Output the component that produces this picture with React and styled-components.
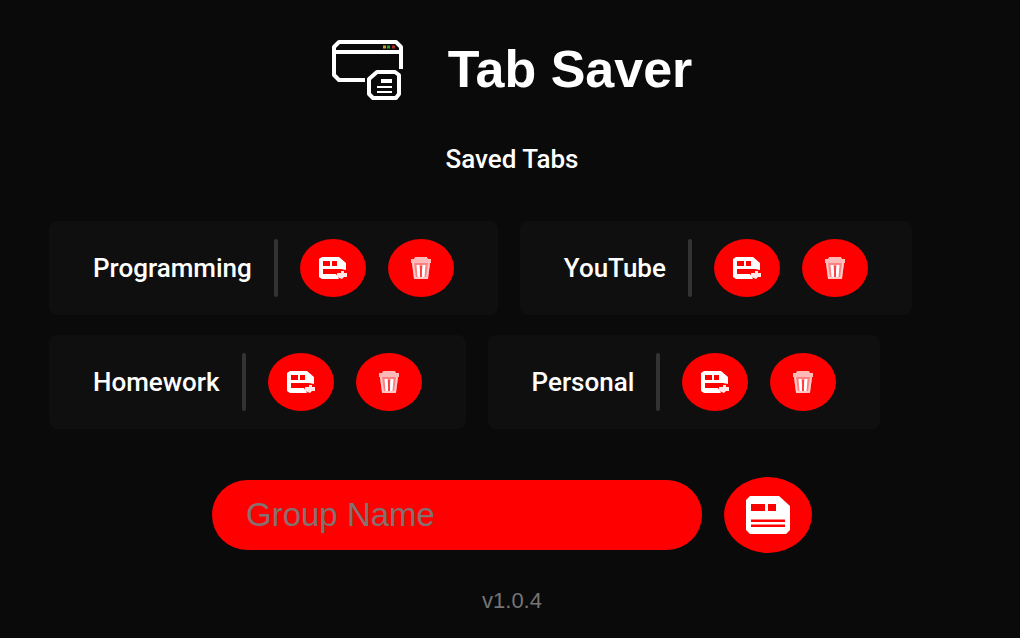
import React, { useState } from 'react';
import styled, { createGlobalStyle } from 'styled-components';

const GlobalStyle = createGlobalStyle`
  * {
    box-sizing: border-box;
  }

  body {
    margin: 0;
    background-color: #0a0a0a;
    color: #fff;
    font-family: Arial, 'Liberation Sans', sans-serif;
  }
`;

const Page = styled.main`
  display: flex;
  flex-direction: column;
  padding: 36px 45px 24px 49px;
`;

const Header = styled.header`
  display: flex;
  align-items: center;
  justify-content: center;
  gap: 44px;
  height: 66px;
`;

const Title = styled.h1`
  margin: 0;
  font-size: 52px;
  line-height: 60px;
`;

const Subtitle = styled.h2`
  margin: 42px 0 47px;
  font-family: Roboto, sans-serif;
  font-size: 26px;
  font-weight: 500;
  line-height: 30px;
  text-align: center;
`;

const GroupList = styled.ul`
  display: flex;
  flex-wrap: wrap;
  gap: 20px 22px;
  margin: 0;
  padding: 0;
  list-style: none;
`;

const GroupCard = styled.li`
  display: flex;
  align-items: center;
  gap: 22px;
  padding: 18px 44px;
  border-radius: 8px;
  background-color: #0f0f0f;
`;

const GroupName = styled.span`
  font-family: Roboto, sans-serif;
  font-size: 26px;
  font-weight: 500;
  line-height: 30px;
`;

const Divider = styled.span`
  align-self: stretch;
  width: 4px;
  border-radius: 2px;
  background-color: #333;
`;

const RoundButton = styled.button`
  display: flex;
  align-items: center;
  justify-content: center;
  flex-shrink: 0;
  width: ${({ $large }) => ($large ? 88 : 66)}px;
  height: ${({ $large }) => ($large ? 76 : 58)}px;
  padding: 0;
  border: none;
  border-radius: 50%;
  background-color: #f00;
  color: #fff;
  cursor: pointer;
`;

const SaveForm = styled.form`
  display: flex;
  align-items: center;
  justify-content: center;
  gap: 22px;
  margin-top: 48px;
`;

const NameInput = styled.input`
  flex: 0 1 490px;
  min-width: 0;
  height: 70px;
  padding: 0 34px;
  border: none;
  border-radius: 40px;
  outline: none;
  background-color: #f00;
  color: #fff;
  font-family: inherit;
  font-size: 33px;

  &::placeholder {
    color: #857070;
    opacity: 1;
  }
`;

const Version = styled.footer`
  margin-top: 36px;
  color: #757575;
  font-size: 22px;
  line-height: 24px;
  text-align: center;
`;

const LogoIcon = () => (
  <svg width="72" height="62" viewBox="0 0 72 62" fill="none" aria-hidden="true">
    <path
      d="M33 42H7L2 37V9L7 4H64L69 9V31M2 14H69"
      stroke="#fff"
      strokeWidth="4"
      strokeLinejoin="round"
    />
    <path d="M51 9h3" stroke="#c9a21c" strokeWidth="3" />
    <path d="M55 9h3" stroke="#1fa83a" strokeWidth="3" />
    <path d="M60 9h3" stroke="#b3251f" strokeWidth="3" />
    <path
      d="M45 34H63L67 37V56L64 60H41L37 56V41Z"
      stroke="#fff"
      strokeWidth="4"
      strokeLinejoin="round"
    />
    <path d="M49 43H60" stroke="#fff" strokeWidth="4" />
    <path d="M45 49H60M45 54H60" stroke="#fff" strokeWidth="2" />
  </svg>
);

const SaveIcon = () => (
  <svg width="44" height="38" viewBox="0 0 44 38" aria-hidden="true">
    <path
      fill="currentColor"
      fillRule="evenodd"
      d="M4 0H33L44 10V34L40 38H4L0 34V4ZM5 8V15H19V8ZM22 8V15H30V8ZM5 23.500V26H39V23.500ZM5 28.500V31H39V28.500Z"
    />
  </svg>
);

const OpenIcon = () => (
  <svg width="28" height="24" viewBox="0 0 28 24" aria-hidden="true">
    <path
      fill="currentColor"
      fillRule="evenodd"
      d="M3 1H20L27 7V14L22 13H4V18H17L20 23H3L0 21V3ZM4 5V10H11V5ZM13 5V10H18V5Z"
    />
    <path
      fill="currentColor"
      d="M18 17H22V15H25V17H28V21H25L23 23L18 21Z"
      opacity="0.9"
    />
  </svg>
);

const TrashIcon = () => (
  <svg width="22" height="22" viewBox="0 0 22 22" fill="none" aria-hidden="true">
    <path fill="#ffb8b8" d="M5 0H17L18 2H21V6H1V2H4Z" />
    <path fill="#ff8080" d="M2 6H20L18 22H4Z" />
    <path d="M3 6L5 21H17L19 6" stroke="#ffc8c8" strokeWidth="2" />
    <path d="M8 8L9 20M14 8L13 20" stroke="#fff" strokeWidth="3" />
    <path d="M11 9V20" stroke="#ff4040" strokeWidth="2" />
  </svg>
);

const savedGroups = ['Programming', 'YouTube', 'Homework', 'Personal'];

const App = () => {
  const [groups, setGroups] = useState(savedGroups);
  const [name, setName] = useState('');

  const handleSave = (event) => {
    event.preventDefault();
    const trimmed = name.trim();
    if (!trimmed || groups.includes(trimmed)) return;
    setGroups([...groups, trimmed]);
    setName('');
  };

  const handleDelete = (group) => {
    setGroups(groups.filter((item) => item !== group));
  };

  return (
    <>
      <GlobalStyle />
      <Page>
        <Header>
          <LogoIcon />
          <Title>Tab Saver</Title>
        </Header>
        <Subtitle>Saved Tabs</Subtitle>
        <GroupList>
          {groups.map((group) => (
            <GroupCard key={group}>
              <GroupName>{group}</GroupName>
              <Divider />
              <RoundButton type="button" aria-label={`Open ${group}`}>
                <OpenIcon />
              </RoundButton>
              <RoundButton
                type="button"
                aria-label={`Delete ${group}`}
                onClick={() => handleDelete(group)}
              >
                <TrashIcon />
              </RoundButton>
            </GroupCard>
          ))}
        </GroupList>
        <SaveForm onSubmit={handleSave}>
          <NameInput
            type="text"
            aria-label="Group Name"
            placeholder="Group Name"
            value={name}
            onChange={(event) => setName(event.target.value)}
          />
          <RoundButton type="submit" aria-label="Save tabs" $large>
            <SaveIcon />
          </RoundButton>
        </SaveForm>
        <Version>v1.0.4</Version>
      </Page>
    </>
  );
};

export default App;
